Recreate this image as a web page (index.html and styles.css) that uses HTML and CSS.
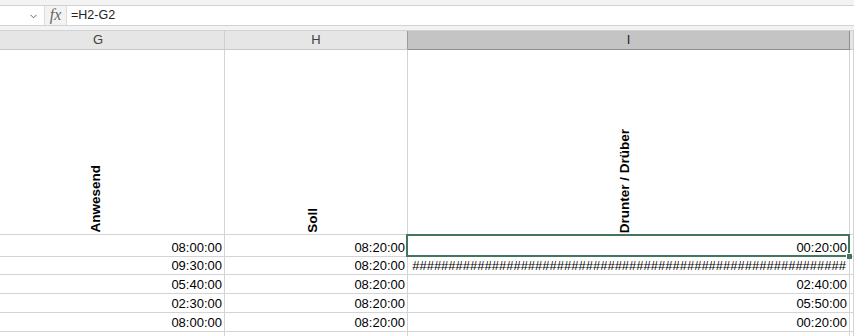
FILE: index.html
```html
<!DOCTYPE html>
<html lang="de">
<head>
  <meta charset="UTF-8">
  <meta name="viewport" content="width=device-width, initial-scale=1.0">
  <title>Arbeitszeit</title>
  <link rel="stylesheet" href="styles.css">
</head>
<body>
  <div class="top-strip"></div>

  <!-- Formula bar -->
  <div class="formula-bar">
    <div class="name-box">
      <svg class="chevron" width="7" height="5" viewBox="0 0 7 5">
        <polyline points="0.5,0.8 3.5,3.8 6.5,0.8" fill="none" stroke="#6a6a6a" stroke-width="1"/>
      </svg>
    </div>
    <div class="fx">fx</div>
    <div class="formula">=H2-G2</div>
  </div>
  <div class="band"></div>

  <div class="sheet">
    <!-- column letters -->
    <div class="col-head col-g">G</div>
    <div class="col-head col-h">H</div>
    <div class="col-head col-i selected">I</div>
    <div class="col-head col-j"></div>

    <!-- row 1: rotated titles -->
    <div class="cell title-cell col-g"><span class="rotated">Anwesend</span></div>
    <div class="cell title-cell col-h"><span class="rotated">Soll</span></div>
    <div class="cell title-cell col-i"><span class="rotated">Drunter / Drüber</span></div>
    <div class="cell title-cell col-j"></div>

    <div class="cell row-2">08:00:00</div>
    <div class="cell row-2">08:20:00</div>
    <div class="cell row-2 active">00:20:00</div>
    <div class="cell row-2"></div>

    <div class="cell">09:30:00</div>
    <div class="cell">08:20:00</div>
    <div class="cell hashes">############################################################</div>
    <div class="cell"></div>

    <div class="cell">05:40:00</div>
    <div class="cell">08:20:00</div>
    <div class="cell">02:40:00</div>
    <div class="cell"></div>

    <div class="cell">02:30:00</div>
    <div class="cell">08:20:00</div>
    <div class="cell">05:50:00</div>
    <div class="cell"></div>

    <div class="cell">08:00:00</div>
    <div class="cell">08:20:00</div>
    <div class="cell">00:20:00</div>
    <div class="cell"></div>

    <div class="cell last"></div>
    <div class="cell last"></div>
    <div class="cell last"></div>
    <div class="cell last"></div>
  </div>
</body>
</html>
```

FILE: styles.css
```css
body {
  margin: 0;
  padding: 0;
  background-color: #fff;
  font-family: "Liberation Sans", Arial, sans-serif;
  color: #000;
  overflow: hidden;
}

.top-strip {
  height: 5px;
  background-color: #f3f3f3;
}

.formula-bar {
  display: flex;
  height: 19px;
  border-top: 1px solid #d2d2d2;
  border-bottom: 1px solid #d2d2d2;
  background-color: #fff;
}

.name-box {
  width: 44px;
  display: flex;
  align-items: center;
  justify-content: flex-end;
  padding-right: 7px;
  box-sizing: border-box;
}

.chevron {
  display: block;
  margin-top: 1px;
}

.fx {
  width: 21px;
  border-left: 1px solid #dcdcdc;
  border-right: 1px solid #dcdcdc;
  background-color: #f3f3f3;
  font-family: "Liberation Serif", "Times New Roman", serif;
  font-style: italic;
  font-size: 16px;
  color: #666;
  text-align: center;
  line-height: 18px;
}

.formula {
  padding-left: 4px;
  font-size: 12.5px;
  line-height: 19px;
  color: #222;
}

.band {
  height: 4px;
  background-color: #f3f3f3;
  border-bottom: 1px solid #d2d2d2;
}

.sheet {
  display: grid;
  grid-template-columns: 225px 183px 442px 1fr;
  grid-template-rows: 19px 185px 22px 18px 19px 19px 19px 19px;
}

.col-head {
  background-color: #e6e6e6;
  border-right: 1px solid #cfcfcf;
  border-bottom: 1px solid #c8c8c8;
  font-size: 13px;
  color: #404040;
  text-align: center;
  line-height: 18px;
}

.col-head.col-g {
  padding-right: 28px;
}

.col-head.col-h {
  border-right-color: #9b9b9b;
}

.col-head.selected {
  background-color: #c4c4c4;
  border-right-color: #8e8e8e;
  border-bottom: 1px solid #8e8e8e;
  color: #262626;
}

.cell {
  border-right: 1px solid #d4d4d4;
  border-bottom: 1px solid #d4d4d4;
  font-size: 13px;
  line-height: 15px;
  display: flex;
  align-items: flex-end;
  justify-content: flex-end;
  padding: 0 2px 1px 0;
  overflow: hidden;
  white-space: nowrap;
  position: relative;
}

.title-cell {
  justify-content: center;
  padding: 0 0 1px 0;
}

.title-cell.col-g {
  padding-right: 34px;
}

.title-cell.col-h {
  padding-right: 8px;
}

.title-cell.col-i {
  padding-right: 9px;
}

.rotated {
  writing-mode: vertical-rl;
  transform: rotate(180deg);
  font-weight: bold;
  font-size: 13.5px;
  line-height: 15px;
}

.hashes {
  padding-right: 3px;
}

.last {
  border-bottom: none;
}

/* active cell outline */
.active {
  overflow: visible;
  z-index: 1;
}

.active::after {
  content: "";
  position: absolute;
  left: -2px;
  top: -1px;
  right: -1px;
  bottom: -1px;
  border: 2px solid #44775a;
}

.active::before {
  content: "";
  position: absolute;
  right: -3px;
  bottom: -3px;
  width: 5px;
  height: 5px;
  background-color: #44775a;
  border-left: 1px solid #fff;
  border-top: 1px solid #fff;
  z-index: 2;
}
```
